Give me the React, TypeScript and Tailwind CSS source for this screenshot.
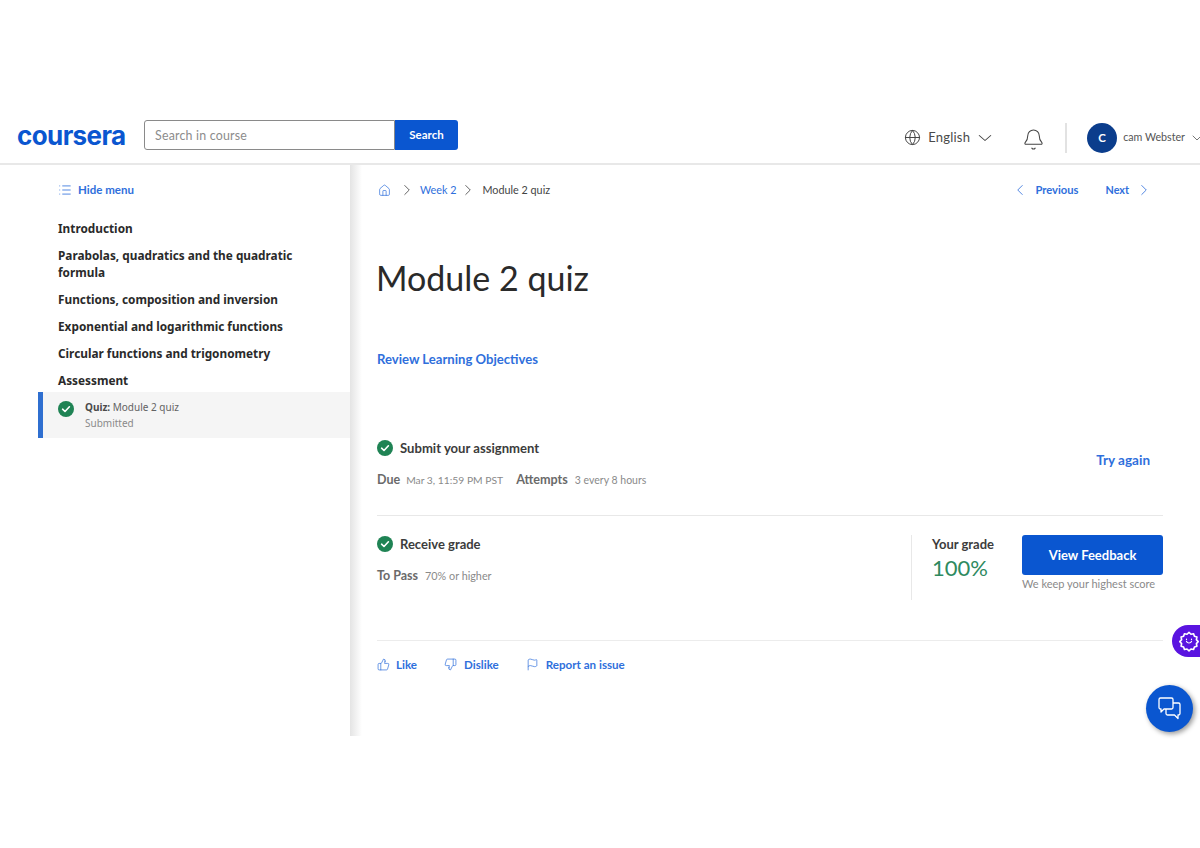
import React from "react";
import { Globe, ChevronDown, ChevronRight, ChevronLeft, Bell, List, Home, ThumbsUp, ThumbsDown, Flag } from "lucide-react";

const blue = "text-[#2f6fdc]";

function CheckCircle({ size = 16 }: { size?: number }) {
  return (
    <svg width={size} height={size} viewBox="0 0 16 16" className="shrink-0">
      <circle cx="8" cy="8" r="8" fill="#1f8354" />
      <path d="M4.6 8.2 7 10.5l4.4-4.7" fill="none" stroke="#fff" strokeWidth="1.6" strokeLinecap="round" strokeLinejoin="round" />
    </svg>
  );
}

function NavItem({ children }: { children: React.ReactNode }) {
  return <div className="text-[11.8px] leading-[17px] font-bold text-[#2a2a2a]">{children}</div>;
}

export default function App() {
  return (
    <div className="w-[1200px] h-[848px] bg-white overflow-hidden relative font-['Lato','Liberation_Sans',sans-serif]">
      <div className="h-[112px]" />
      <header className="h-[53px] flex items-center border-b-2 border-[#e8e8e8]">
        <div className="w-[144px] pl-[17px] shrink-0 font-['Inter',sans-serif] font-bold text-[26px] tracking-[-0.6px] leading-none text-[#0a56d0] pb-[3px]">coursera</div>
        <div className="flex h-[30px] w-[314px] mb-[5px]">
          <div className="flex-1 border border-[#8a8a8a] rounded-l-[3px] flex items-center pl-[10px] pt-[2px] text-[12.4px] text-[#8c8c8c] tracking-[0.2px]">Search in course</div>
          <div className="w-[63px] bg-[#0a56d0] rounded-r-[3px] flex items-center justify-center text-[11.5px] font-bold text-white">Search</div>
        </div>
        <div className="flex-1" />
        <div className="flex items-center mr-[-1px]">
          <Globe size={17} strokeWidth={1.4} className="text-[#444]" />
          <span className="ml-[7px] text-[13px] text-[#4a4a4a] tracking-[0.2px]">English</span>
          <ChevronDown size={20} strokeWidth={1.1} className="ml-[5px] text-[#444] [transform:scaleX(1.15)]" />
          <Bell size={23} strokeWidth={1.1} className="ml-[27px] mt-[4px] text-[#444]" />
          <div className="ml-[20px] w-[2px] h-[30px] bg-[#e2e2e2]" />
          <div className="ml-[20px] w-[30px] h-[30px] rounded-full bg-[#0b3d8c] flex items-center justify-center text-white text-[11.5px] font-bold">C</div>
          <span className="ml-[6px] text-[10.7px] text-[#555]">cam Webster</span>
          <ChevronDown size={16} strokeWidth={1.1} className="ml-[4px] mr-[-4px] text-[#444]" />
        </div>
      </header>
      <div className="flex h-[571px]">
        <aside className="w-[350px] shrink-0 pt-[16px] font-['Noto_Sans',sans-serif]">
          <div className={`ml-[58px] flex items-center text-[11px] font-bold ${blue}`}>
            <List size={14} strokeWidth={1.4} />
            <span className="ml-[6px] font-['Lato',sans-serif] text-[11.5px]">Hide menu</span>
          </div>
          <div className="mt-[22px] ml-[58px] mr-[40px] flex flex-col gap-[10px]">
            <NavItem>Introduction</NavItem>
            <NavItem>Parabolas, quadratics and the quadratic formula</NavItem>
            <NavItem>Functions, composition and inversion</NavItem>
            <NavItem>Exponential and logarithmic functions</NavItem>
            <NavItem>Circular functions and trigonometry</NavItem>
            <NavItem>Assessment</NavItem>
          </div>
          <div className="mt-[3px] ml-[38px] h-[46px] bg-[#f5f5f5] border-l-[5px] border-[#2f6fd0] flex pl-[15px] pt-[7px]">
            <div className="mt-[2px]"><CheckCircle /></div>
            <div className="ml-[11px] text-[10px] leading-[16px] text-[#636363]">
              <div><b className="text-[#4a4a4a]">Quiz:</b> Module 2 quiz</div>
              <div className="text-[#8a8a8a]">Submitted</div>
            </div>
          </div>
        </aside>
        <div className="w-[12px] shrink-0 bg-gradient-to-r from-[#e4e4e4] to-white" />
        <main className="flex-1 pl-[15px] pr-[37px] pt-[15px]">
          <div className="flex items-center h-[20px] text-[10.8px]">
            <Home size={13} strokeWidth={1.3} className={`ml-[1px] ${blue}`} />
            <ChevronRight size={18} strokeWidth={1.1} className="ml-[7px] text-[#444]" />
            <span className={`ml-[4px] ${blue}`}>Week 2</span>
            <ChevronRight size={18} strokeWidth={1.1} className="ml-[3px] text-[#444]" />
            <span className="ml-[5px] text-[#444]">Module 2 quiz</span>
            <div className="flex-1" />
            <ChevronLeft size={18} strokeWidth={1.1} className={blue} />
            <span className={`ml-[6px] text-[11.2px] font-bold ${blue}`}>Previous</span>
            <span className={`ml-[27px] font-bold ${blue}`}>Next</span>
            <ChevronRight size={18} strokeWidth={1.1} className={`ml-[6px] mr-[10px] ${blue}`} />
          </div>
          <h1 className="mt-[56px] ml-[-1px] text-[34px] leading-[44px] text-[#2a2a2a] font-normal">Module 2 quiz</h1>
          <div className={`mt-[50px] text-[13.1px] leading-[18px] font-bold ${blue}`}>Review Learning Objectives</div>
          <div className="mt-[62px] flex items-start justify-between h-[85px]">
            <div className="pt-[9px]">
              <div className="flex items-center text-[13.1px] font-bold text-[#3c3c3c] leading-[18px]">
                <CheckCircle />
                <span className="ml-[7px]">Submit your assignment</span>
              </div>
              <div className="mt-[14px] flex items-baseline text-[10.3px] leading-[18px] text-[#8a8a8a]">
                <b className="text-[12.5px] font-bold text-[#6a6a6a]">Due</b>
                <span className="ml-[6px]">Mar 3, 11:59 PM PST</span>
                <b className="ml-[13px] text-[12.6px] font-bold text-[#6a6a6a]">Attempts</b>
                <span className="ml-[7px] text-[10.5px]">3 every 8 hours</span>
              </div>
            </div>
            <div className={`mr-[13px] mt-[20px] text-[13.5px] font-bold ${blue}`}>Try again</div>
          </div>
          <div className="h-px bg-[#e8e8e8]" />
          <div className="mt-[19px] flex h-[65px]">
            <div className="flex-1">
              <div className="flex items-center text-[13px] font-bold text-[#3c3c3c] leading-[18px]">
                <CheckCircle />
                <span className="ml-[7px]">Receive grade</span>
              </div>
              <div className="mt-[14px] flex items-baseline text-[10.8px] leading-[18px] text-[#8a8a8a]">
                <b className="text-[12.5px] font-bold text-[#6a6a6a]">To Pass</b>
                <span className="ml-[7px]">70% or higher</span>
              </div>
            </div>
            <div className="w-px bg-[#e8e8e8]" />
            <div className="w-[110px] pl-[20px] pt-[1px]">
              <div className="text-[13px] font-bold leading-[16px] text-[#3c3c3c]">Your grade</div>
              <div className="text-[22px] leading-[32px] text-[#2f8a5f]">100%</div>
            </div>
            <div className="w-[141px]">
              <div className="h-[40px] bg-[#0a56d0] rounded-[3px] flex items-center justify-center pt-[2px] text-[13px] font-bold text-white">View Feedback</div>
              <div className="mt-[2px] text-[11px] leading-[14px] text-[#8a8a8a] whitespace-nowrap">We keep your highest score</div>
            </div>
          </div>
          <div className="mt-[40px] h-px bg-[#ececec]" />
          <div className={`mt-[15px] flex items-center text-[11.6px] font-bold ${blue}`}>
            <ThumbsUp size={13} strokeWidth={1.3} />
            <span className="ml-[6px]">Like</span>
            <ThumbsDown size={13} strokeWidth={1.3} className="ml-[27px]" />
            <span className="ml-[7px]">Dislike</span>
            <Flag size={13} strokeWidth={1.3} className="ml-[27px]" />
            <span className="ml-[7px]">Report an issue</span>
          </div>
        </main>
      </div>
      <div className="absolute left-[1172px] top-[625px] w-[40px] h-[32px] rounded-l-[16px] bg-[#5a14e0] flex items-center pl-[5px]">
        <svg width="24" height="24" viewBox="0 0 24 24" fill="none" stroke="#fff" strokeWidth="1.8" strokeLinejoin="round">
          <path d="M12 2.5l2.2 2 2.9-.6.9 2.8 2.8.9-.6 2.9 2 2.2-2 2.2.6 2.9-2.8.9-.9 2.8-2.9-.6-2.2 2-2.2-2-2.9.6-.9-2.8-2.8-.9.6-2.9-2-2.2 2-2.2-.6-2.9 2.8-.9.9-2.8 2.9.6z" transform="translate(1.2 1.2) scale(.9)" />
          <path d="M9.500 12.500c.5 1 1.300 1.500 2.500 1.500s2-.5 2.500-1.500M9.500 10v.6M14.500 10v.6" strokeLinecap="round" strokeWidth="1.200" />
        </svg>
      </div>
      <div className="absolute left-[1146px] top-[685px] w-[47px] h-[47px] rounded-full bg-[#0a56d0] flex items-center justify-center shadow-[2px_2px_5px_rgba(0,0,0,0.4)]">
        <svg width="26" height="26" viewBox="0 0 26 26" fill="none" stroke="#fff" strokeWidth="1.3" strokeLinejoin="round">
          <path d="M2 3.500A1.500 1.500 0 0 1 3.500 2h11A1.500 1.500 0 0 1 16 3.500v8a1.500 1.500 0 0 1-1.500 1.500H7l-3 3v-3h-.5A1.500 1.500 0 0 1 2 11.500z" />
          <path d="M16 7h5.500A1.500 1.500 0 0 1 23 8.500v9a1.500 1.500 0 0 1-1.500 1.500H21v3.500L17.500 19H10.500A1.500 1.500 0 0 1 9 17.500V13" />
        </svg>
      </div>
    </div>
  );
}
